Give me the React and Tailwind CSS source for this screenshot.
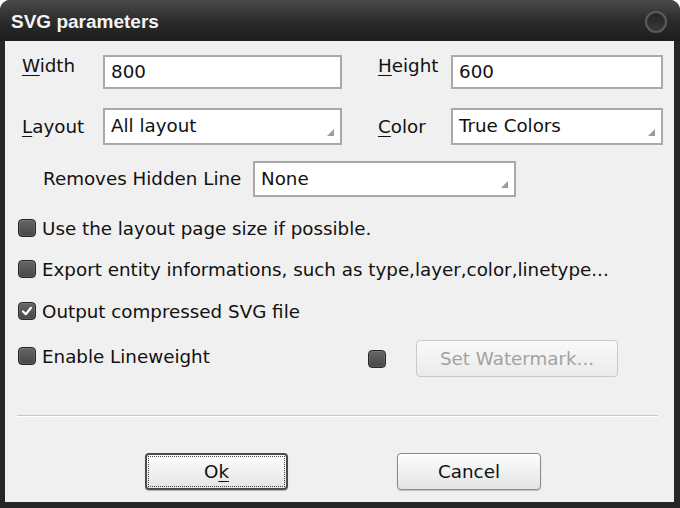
import React from "react";

function Box({ checked }) {
  return (
    <div className="w-[18px] h-[18px] shrink-0 rounded-[4px] border border-[#262626] bg-gradient-to-b from-[#666666] to-[#474747] shadow-[inset_0_0_0_1px_rgba(255,255,255,0.10)] flex items-center justify-center">
      {checked && (
        <svg width="14" height="14" viewBox="0 0 14 14">
          <path d="M3 7.5 L5.8 10.2 L11 3.8" fill="none" stroke="#ffffff" strokeWidth="2.2" strokeLinecap="round" strokeLinejoin="round" />
        </svg>
      )}
    </div>
  );
}

function Field({ w, h, children, select }) {
  return (
    <div className={`${w} ${h} shrink-0 border-2 border-[#a9a9a9] bg-white flex items-center pl-[6px] relative`}>
      <span className="leading-none">{children}</span>
      {select && (
        <svg className="absolute right-[6px] bottom-[7px]" width="7" height="7" viewBox="0 0 7 7">
          <polygon points="7,0 7,7 0,7" fill="#9c9c9c" />
        </svg>
      )}
    </div>
  );
}

export default function App() {
  return (
    <div className="w-[680px] h-[508px] bg-white">
      <div className="w-[680px] h-[508px] flex flex-col rounded-t-[10px] overflow-hidden bg-[#262626] font-['DejaVu_Sans',sans-serif] text-[18.3px] text-[#111]">
        {/* title bar */}
        <div className="h-[41px] shrink-0 flex items-center justify-between pl-[11px] pr-[13px] pt-[2px] bg-gradient-to-b from-[#4a4a4a] via-[#2c2c2c] to-[#1c1c1c]">
          <span className="font-['Liberation_Sans',sans-serif] font-bold text-[19px] text-[#f4f4f4] leading-none">
            SVG parameters
          </span>
          <div className="w-[22px] h-[22px] rounded-full border-2 border-[#5c5c5c] bg-gradient-to-b from-[#262626] to-[#383838]" />
        </div>

        {/* body */}
        <div className="flex-1 ml-[5px] mr-[6px] mb-[6px] bg-[#f0f0f0] flex flex-col">
          {/* Row A */}
          <div className="mt-[14px] pl-[17px] flex items-start">
            <div className="w-[81px] leading-[22px]">
              <span className="underline underline-offset-[3px]">W</span>idth
            </div>
            <Field w="w-[239px]" h="h-[34px]">800</Field>
            <div className="w-[36px]" />
            <div className="w-[73px] leading-[22px]">
              <span className="underline underline-offset-[3px]">H</span>eight
            </div>
            <Field w="w-[212px]" h="h-[34px]">600</Field>
          </div>

          {/* Row B */}
          <div className="mt-[19px] pl-[17px] flex items-center">
            <div className="w-[81px] leading-[22px]">
              <span className="underline underline-offset-[3px]">L</span>ayout
            </div>
            <Field w="w-[239px]" h="h-[37px]" select>All layout</Field>
            <div className="w-[36px]" />
            <div className="w-[73px] leading-[22px]">
              <span className="underline underline-offset-[3px]">C</span>olor
            </div>
            <Field w="w-[212px]" h="h-[37px]" select>True Colors</Field>
          </div>

          {/* Row C */}
          <div className="mt-[16px] pl-[38px] flex items-center">
            <div className="w-[210px] leading-[22px]">Removes Hidden Line</div>
            <Field w="w-[263px]" h="h-[36px]" select>None</Field>
          </div>

          {/* Checkboxes */}
          <div className="mt-[22px] pl-[13px] flex flex-col">
            <div className="flex items-start gap-[6px]">
              <Box />
              <span className="leading-[20px]">Use the layout page size if possible.</span>
            </div>
            <div className="mt-[21px] flex items-start gap-[6px]">
              <Box />
              <span className="leading-[20px]">Export entity informations, such as type,layer,color,linetype...</span>
            </div>
            <div className="mt-[22px] flex items-start gap-[6px]">
              <Box checked />
              <span className="leading-[20px]">Output compressed SVG file</span>
            </div>
            <div className="mt-[18px] flex items-start">
              <div className="w-[350px] flex items-start gap-[6px]">
                <div className="mt-[7px]">
                  <Box />
                </div>
                <span className="leading-[20px] mt-[7px]">Enable Lineweight</span>
              </div>
              <div className="mt-[10px]">
                <Box />
              </div>
              <div className="ml-[30px] w-[202px] h-[37px] rounded-[4px] border border-[#c9c9c9] bg-gradient-to-b from-[#f9f9f9] to-[#ebebeb] flex items-center justify-center text-[#a2a2a2]">
                Set Watermark...
              </div>
            </div>
          </div>

          {/* separator */}
          <div className="mt-[38px] ml-[12px] w-[641px] h-[2px] border-t border-b border-t-[#c8c8c8] border-b-white" />

          {/* buttons */}
          <div className="mt-[36px] pl-[140px] flex gap-[109px]">
            <div className="w-[143px] h-[37px] rounded-[4px] border-2 border-[#4a4a4a] p-[1px] bg-gradient-to-b from-[#fdfdfd] to-[#e4e4e4] shadow-[0_1px_1px_rgba(0,0,0,0.25)]">
              <div className="w-full h-full border border-dotted border-[#444] flex items-center justify-center">
                <span>
                  O<span className="underline underline-offset-[3px]">k</span>
                </span>
              </div>
            </div>
            <div className="w-[144px] h-[37px] rounded-[4px] border border-[#8a8a8a] bg-gradient-to-b from-[#fdfdfd] to-[#e4e4e4] shadow-[0_1px_1px_rgba(0,0,0,0.2)] flex items-center justify-center">
              Cancel
            </div>
          </div>
        </div>
      </div>
    </div>
  );
}
